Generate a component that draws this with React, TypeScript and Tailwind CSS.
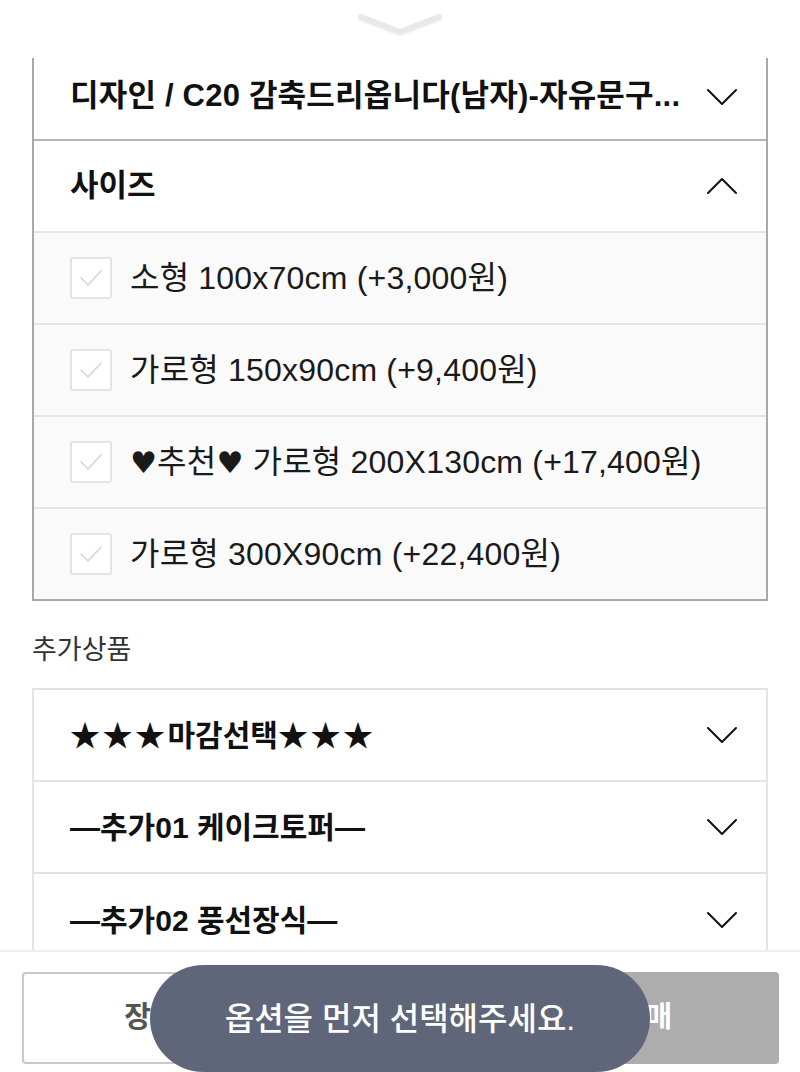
import { ReactNode } from "react";

const Chevron = ({ up = false }: { up?: boolean }) => (
  <svg width="32" height="18" viewBox="0 0 32 18" fill="none" className="shrink-0">
    <polyline
      points={up ? "2,16 16,2 30,16" : "2,2 16,16 30,2"}
      stroke="#111"
      strokeWidth="2"
      strokeLinecap="round"
      strokeLinejoin="round"
    />
  </svg>
);

const CheckBox = () => (
  <div className="w-[42px] h-[42px] shrink-0 border-2 border-[#e4e4e4] rounded-[3px] bg-white flex items-center justify-center">
    <svg width="24" height="18" viewBox="0 0 24 18" fill="none">
      <polyline points="2,9 9,16 22,2" stroke="#d6d6d6" strokeWidth="1.6" strokeLinecap="round" strokeLinejoin="round" />
    </svg>
  </div>
);

const Heart = () => <span className="[font-family:'DejaVu_Sans',sans-serif] text-[30px]">♥</span>;

const Stars = () => <span className="tracking-[2.5px]">★★★</span>;

const sizeOptions: ReactNode[] = [
  "소형 100x70cm (+3,000원)",
  "가로형 150x90cm (+9,400원)",
  <>
    <Heart />
    추천
    <Heart /> 가로형 200X130cm (+17,400원)
  </>,
  "가로형 300X90cm (+22,400원)",
];

const extraItems: ReactNode[] = [
  <>
    <Stars />
    마감선택
    <Stars />
  </>,
  "—추가01 케이크토퍼—",
  "—추가02 풍선장식—",
];

export default function App() {
  return (
    <div className="relative w-[800px] h-[1072px] overflow-hidden bg-white flex flex-col text-[#111] [font-family:'Liberation_Sans','Noto_Sans_CJK_KR',sans-serif]">
      <div className="flex-1 overflow-hidden">
        {/* pull handle */}
        <div className="h-[58px] flex justify-center pt-[11px]">
          <svg width="96" height="32" viewBox="0 0 96 32" fill="none">
            <polyline
              points="9,6 48,21 87,6"
              stroke="#e8e8e8"
              strokeWidth="6"
              strokeLinecap="round"
              strokeLinejoin="round"
              style={{ filter: "drop-shadow(0 1px 1px rgba(0,0,0,0.07))" }}
            />
          </svg>
        </div>

        {/* option box */}
        <div className="mx-8 border-x-2 border-b-2 border-[#a8a8a8]">
          <div className="h-[83px] flex items-center justify-between pl-[36px] pr-[28px] pb-[4px] border-b-2 border-[#b4b4b4]">
            <span className="text-[31px] font-bold tracking-[0.2px] whitespace-nowrap">
              디자인 / C20 감축드리옵니다(남자)-자유문구...
            </span>
            <Chevron />
          </div>
          <div className="h-[92px] flex items-center justify-between pl-[36px] pr-[28px] border-b-2 border-[#e6e6e6]">
            <span className="text-[31px] font-bold">사이즈</span>
            <Chevron up />
          </div>
          {sizeOptions.map((label, i) => {
            const last = i === sizeOptions.length - 1;
            return (
              <div
                key={i}
                className={`flex items-center gap-[18px] pl-[36px] bg-[#fafafa] ${
                  last ? "h-[90px]" : "h-[92px] border-b-2 border-[#e6e6e6]"
                }`}
              >
                <CheckBox />
                <span className="text-[32px] tracking-[0.2px] text-[#1a1a1a] whitespace-nowrap">{label}</span>
              </div>
            );
          })}
        </div>

        <div className="h-[87px] flex items-center px-8 pt-[12px] text-[27px] text-[#333]">추가상품</div>

        {/* additional products */}
        <div className="mx-8 border-2 border-[#e3e3e3]">
          {extraItems.map((label, i) => (
            <div
              key={i}
              className="h-[92px] flex items-center justify-between pl-[36px] pr-[28px] border-b-2 border-[#e3e3e3] last:border-b-0"
            >
              <span className="text-[30px] font-bold whitespace-nowrap">{label}</span>
              <Chevron />
            </div>
          ))}
        </div>
      </div>

      {/* bottom bar */}
      <div className="h-[122px] shrink-0 border-t-2 border-[#eeeeee] bg-white flex gap-4 pl-[22px] pr-[21px] pt-[20px]">
        <button className="flex-1 h-[92px] border-2 border-[#c8c8c8] rounded-[4px] bg-white text-[29px] font-bold text-[#555] flex items-center justify-center pl-[20px]">
          장바구니 담기
        </button>
        <button className="flex-1 h-[92px] rounded-[4px] bg-[#adadad] text-[29px] font-bold text-white flex items-center justify-center pl-[60px]">
          바로 구매
        </button>
      </div>

      {/* toast */}
      <div className="absolute left-[150px] top-[965px] w-[500px] h-[107px] rounded-full bg-[#5f6679] flex items-center justify-center">
        <span className="text-[32px] font-medium text-white">옵션을 먼저 선택해주세요.</span>
      </div>
    </div>
  );
}
